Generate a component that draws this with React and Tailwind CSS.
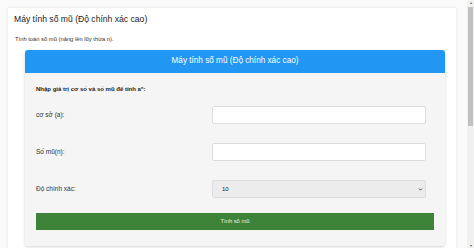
import { ChevronDown } from 'lucide-react'

const fields = [
  { id: 'base', label: 'cơ sở (a):' },
  { id: 'exp', label: 'Số mũ(n):' },
]

function Row({ label, children }) {
  return (
    <div className="flex items-center h-[18px]">
      <label className="w-[176px] text-[6.5px] text-[#333]">{label}</label>
      <div className="w-[214px]">{children}</div>
    </div>
  )
}

export default function App() {
  return (
    <div className="flex h-[248px] w-[474px] overflow-hidden bg-[#fbfbfb] font-['Liberation_Sans',Arial,sans-serif]">
      {/* Page */}
      <div className="flex-1 pl-2 pt-2">
        <div className="w-[448px] h-[260px] bg-white shadow-[0_0_3px_rgba(0,0,0,0.12)] pt-[5px]">
          <h1 className="px-[6px] text-[8.6px] leading-[12px] text-[#222]">Máy tính số mũ (Độ chính xác cao)</h1>
          <p className="px-[7px] mt-[10px] text-[5.8px] leading-[8px] text-[#333]">Tính toán số mũ (nâng lên lũy thừa n).</p>

          <div className="ml-[17px] mt-[7px] w-[420px] rounded-[3px] shadow-[0_1px_3px_rgba(0,0,0,0.18)] overflow-hidden">
            <div className="h-[23px] bg-[#2196f3] flex items-center justify-center text-white text-[8.2px]">
              Máy tính số mũ (Độ chính xác cao)
            </div>
            <div className="bg-[#f5f5f5] h-[173px] pl-[11px] pr-[10px] pt-[12px]">
              <p className="text-[6px] font-bold text-[#222] leading-[8px]">
                Nhập giá trị cơ số và số mũ để tính a<sup className="text-[4px]">n</sup>:
              </p>

              <div className="mt-[13px] flex flex-col gap-[19px]">
                {fields.map(f => (
                  <Row key={f.id} label={f.label}>
                    <input className="block w-full h-[18px] bg-white border border-[#ddd] rounded-[2px] outline-none" />
                  </Row>
                ))}
                <Row label="Độ chính xác:">
                  <div className="relative w-full h-[18px] bg-[#ececec] border border-[#ddd] rounded-[2px] flex items-center pl-[9px] text-[6px] text-[#222]">
                    10
                    <ChevronDown size={5} strokeWidth={4} className="absolute right-[2px] top-[6px] text-[#333]" />
                  </div>
                </Row>
              </div>

              <button className="mt-[15px] block w-[398px] h-[17px] bg-[#3d8438] text-[#e6f0e4] text-[5.8px]">
                Tính số mũ
              </button>
            </div>
          </div>
        </div>
      </div>

      {/* Scrollbar */}
      <div className="w-[7px] ml-[11px] bg-[#f1f1f1] flex flex-col items-center">
        <div className="h-[5px] text-[4px] leading-[5px] text-[#666]">▴</div>
        <div className="w-[5px] h-[119px] mt-[2px] bg-[#c1c1c1]" />
        <div className="flex-1" />
        <div className="h-[5px] text-[4px] leading-[5px] text-[#666]">▾</div>
      </div>
    </div>
  )
}
